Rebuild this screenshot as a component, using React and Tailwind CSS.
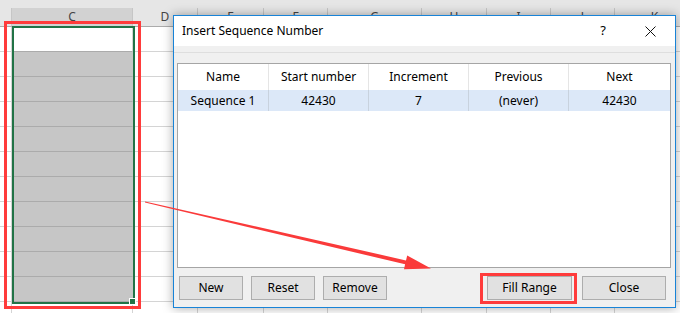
import React from 'react';

const columns = [
  { w: 12, letter: '' },
  { w: 121, letter: 'C', sel: true },
  { w: 65, letter: 'D' },
  { w: 66, letter: 'E' },
  { w: 64, letter: 'F' },
  { w: 94, letter: 'G' },
  { w: 65, letter: 'H' },
  { w: 64, letter: 'I' },
  { w: 64, letter: 'J' },
  { w: 80, letter: 'K' },
];

const rows = Array.from({ length: 12 }, (_, i) => i);

const headers = [
  { label: 'Name', w: 91 },
  { label: 'Start number', w: 100 },
  { label: 'Increment', w: 100 },
  { label: 'Previous', w: 100 },
  { label: 'Next', w: 101 },
];

const sequence = ['Sequence 1', '42430', '7', '(never)', '42430'];

const cellClass = (c, r) => {
  if (!c.sel || r > 10) return 'border-[#d4d4d4]';
  if (r === 0) return 'bg-white border-[#d4d4d4] border-b-[#ababab]';
  return 'bg-[#c6c6c6] border-[#c6c6c6] border-b-[#ababab]';
};

const Sheet = () => (
  <div className="flex flex-col w-[680px] h-[313px] bg-white overflow-hidden">
    <div className="h-[8px] shrink-0 bg-[#e6e6e6]" />
    <div className="flex h-[19px] shrink-0 bg-[#e6e6e6] border-b border-[#ababab]">
      {columns.map((c, i) => (
        <div
          key={i}
          style={{ width: c.w }}
          className={`shrink-0 flex items-center justify-center border-r border-[#c6c6c6] text-[12px] text-[#444] ${c.sel ? 'bg-[#d2d2d2]' : ''}`}
        >
          {c.letter}
        </div>
      ))}
    </div>
    {rows.map((r) => (
      <div key={r} className="flex h-[25px] shrink-0">
        {columns.map((c, i) => (
          <div
            key={i}
            style={{ width: c.w }}
            className={`shrink-0 border-r border-b ${cellClass(c, r)}`}
          />
        ))}
      </div>
    ))}
  </div>
);

const Btn = ({ children, w }) => (
  <button
    style={{ width: w }}
    className="h-[24px] bg-[#e1e1e1] border border-[#adadad] text-[12px] text-black"
  >
    {children}
  </button>
);

const Dialog = () => (
  <div className="absolute left-[173px] top-[15px] w-[503px] h-[293px] border border-[#1883d7] bg-[#f0f0f0] flex flex-col shadow-[0_0_10px_rgba(0,0,0,0.35)]">
    <div className="h-[30px] shrink-0 bg-white flex items-center pl-[8px] text-[12px] text-black">
      <span className="flex-1">Insert Sequence Number</span>
      <span className="w-[10px] text-center text-[13px] mr-[37px]">?</span>
      <svg width="11" height="11" viewBox="0 0 11 11" className="mr-[19px]">
        <path d="M0.5 0.5 L10.5 10.5 M10.5 0.5 L0.5 10.5" stroke="#111" strokeWidth="1" fill="none" />
      </svg>
    </div>
    <div className="h-[7px] shrink-0 border-b border-[#dedede]" />
    <div className="mt-[10px] ml-[3px] w-[494px] h-[205px] shrink-0 bg-white border border-[#a5a5a5] flex flex-col">
      <div className="flex h-[26px] shrink-0">
        {headers.map((h, i) => (
          <div
            key={i}
            style={{ width: h.w }}
            className={`shrink-0 flex items-center justify-center text-[12px] text-black ${i < 4 ? 'border-r border-[#e5e5e5]' : ''}`}
          >
            {h.label}
          </div>
        ))}
      </div>
      <div className="flex h-[21px] shrink-0 bg-[#dce8f8]">
        {sequence.map((v, i) => (
          <div
            key={i}
            style={{ width: headers[i].w }}
            className={`shrink-0 flex items-center justify-center text-[12px] text-black ${i < 4 ? 'border-r border-[#c8d2de]' : ''}`}
          >
            {v}
          </div>
        ))}
      </div>
    </div>
    <div className="flex mt-[8px] pl-[5px] pr-[9px]">
      <div className="flex gap-[8px]">
        <Btn w={64}>New</Btn>
        <Btn w={64}>Reset</Btn>
        <Btn w={64}>Remove</Btn>
      </div>
      <div className="flex gap-[10px] ml-auto">
        <Btn w={85}>Fill Range</Btn>
        <Btn w={84}>Close</Btn>
      </div>
    </div>
  </div>
);

export default function App() {
  return (
    <div
      className="relative w-[680px] h-[313px] overflow-hidden"
      style={{ fontFamily: '"Noto Sans", "Open Sans", sans-serif' }}
    >
      <Sheet />
      {/* selection */}
      <div className="absolute left-[12px] top-[26px] w-[123px] h-[278px] border-2 border-[#217346]" />
      <div className="absolute left-[129px] top-[298px] w-[7px] h-[7px] bg-[#217346] border border-white" />
      <div className="absolute left-[4px] top-[21px] w-[137px] h-[288px] border-[3px] border-[#ff3b3b]" />
      <Dialog />
      <div className="absolute left-[480px] top-[273px] w-[97px] h-[31px] border-[3px] border-[#ff3b3b]" />
      <svg className="absolute left-0 top-0 pointer-events-none" width="680" height="313">
        <polygon
          points="145,201.4 406,260.4 407.2,255.5 431,268.5 404,269.2 405.1,264.3 145,202.6"
          fill="#fa3a3a"
        />
      </svg>
    </div>
  );
}
